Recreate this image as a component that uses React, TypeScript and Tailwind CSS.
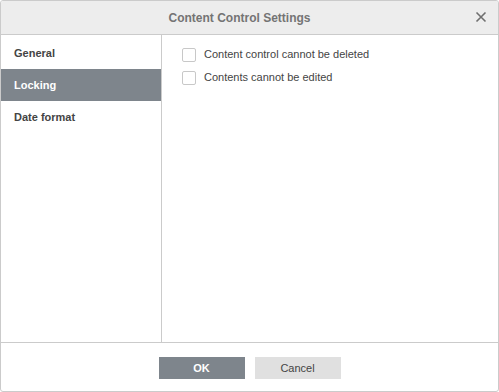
import React, { useState } from "react";

const tabs = ["General", "Locking", "Date format"];

const Check = ({ label }: { label: string }) => (
  <label className="flex items-center h-[23px] cursor-pointer">
    <span className="w-[14px] h-[14px] border border-[#c8c8c8] rounded-[2px] bg-white" />
    <span className="ml-[8px] text-[11px] text-[#444]">{label}</span>
  </label>
);

export default function App() {
  const [active, setActive] = useState("Locking");

  return (
    <div
      className="w-[499px] h-[392px] bg-white border border-[#cbcbcb] rounded-[3px] flex flex-col overflow-hidden"
      style={{ fontFamily: '"Liberation Sans", Arial, sans-serif' }}
    >
      <div className="h-[34px] shrink-0 bg-[#ededed] border-b border-[#cbcbcb] relative flex items-center justify-center pr-[20px]">
        <span className="text-[12px] font-bold text-[#747474]">Content Control Settings</span>
        <button className="absolute right-[11px] top-[10px] w-[12px] h-[12px] text-[#6f6f6f]">
          <svg viewBox="0 0 12 12" width="12" height="12">
            <path d="M1.5 1.5 L10.5 10.5 M10.5 1.5 L1.5 10.5" stroke="currentColor" strokeWidth="1.6" />
          </svg>
        </button>
      </div>

      <div className="flex flex-1 min-h-0">
        <div className="w-[161px] shrink-0 border-r border-[#cbcbcb] pt-[2px]">
          {tabs.map((t) => (
            <div
              key={t}
              onClick={() => setActive(t)}
              className={
                "h-[32px] flex items-center pl-[13px] text-[11px] font-bold cursor-pointer " +
                (active === t ? "bg-[#7e858c] text-white" : "text-[#444]")
              }
            >
              {t}
            </div>
          ))}
        </div>
        <div className="flex-1 pl-[20px] pt-[8px]">
          <Check label="Content control cannot be deleted" />
          <Check label="Contents cannot be edited" />
        </div>
      </div>

      <div className="h-[49px] shrink-0 border-t border-[#cbcbcb] flex items-start justify-center gap-[10px] pt-[14px]">
        <button className="w-[86px] h-[22px] bg-[#7e858c] text-white text-[11px] font-bold">OK</button>
        <button className="w-[86px] h-[22px] bg-[#e0e0e0] text-[#444] text-[11px]">Cancel</button>
      </div>
    </div>
  );
}
